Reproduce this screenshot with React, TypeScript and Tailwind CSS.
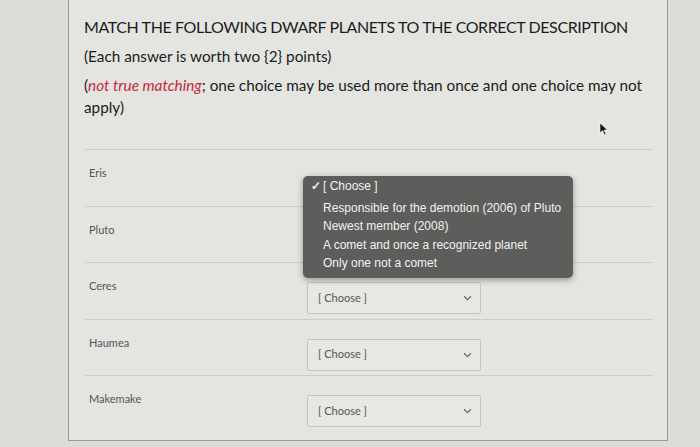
import React from "react";

const rows = ["Eris", "Pluto", "Ceres", "Haumea", "Makemake"];

function Chevron() {
  return (
    <svg width="9" height="6" viewBox="0 0 9 6" className="shrink-0">
      <path d="M1 1.2 L4.5 4.6 L8 1.2" fill="none" stroke="#6b6b6b" strokeWidth="1.3" />
    </svg>
  );
}

function Select({ hidden }: { hidden?: boolean }) {
  return (
    <div
      className={`flex h-[32px] w-[174px] items-center justify-between rounded-[2px] border border-[#c4c4c1] bg-[#e7e7e4] pl-[10px] pr-[8px] ${hidden ? "invisible" : ""}`}
    >
      <span className="text-[11px] text-[#555]">[ Choose ]</span>
      <Chevron />
    </div>
  );
}

export default function App() {
  return (
    <div className="h-[447px] w-[700px] overflow-hidden bg-[#dcdcd9] font-['Lato','Liberation_Sans',sans-serif]">
      <div className="relative ml-[68px] h-[441px] w-[600px] border-b border-l border-r border-[#9c9c99] bg-[#e4e4e1]">
        <div className="px-[15px] pt-[14px] text-[#1c1c1c]">
          <h1 className="whitespace-nowrap text-[16px] leading-[26px] tracking-[-0.4px]">
            MATCH THE FOLLOWING DWARF PLANETS TO THE CORRECT DESCRIPTION
          </h1>
          <p className="mt-[4px] text-[15.3px] leading-[24px]">(Each answer is worth two {"{2}"} points)</p>
          <p className="mt-[6px] text-[15.3px] leading-[22px]">
            (<em className="text-[#c8283a]">not true matching</em>; one choice may be used more than once and one choice may not apply)
          </p>
        </div>
        <div className="ml-[16px] mr-[14px] mt-[31px]">
          {rows.map((r, i) => (
            <div key={r} className="flex h-[56.5px] items-start border-t border-[#cbcbc8]">
              <div className="w-[222px] pl-[4px] pt-[15px] text-[11px] text-[#555]">{r}</div>
              <div className="pt-[19px]">
                <Select hidden={i < 2} />
              </div>
            </div>
          ))}
        </div>

        <div className="absolute left-[234px] top-[176px] w-[270px] rounded-[5px] bg-[#5d5d5c] px-[8px] pb-[5px] pt-[1px] font-['Liberation_Sans',sans-serif] text-[12px] leading-[18.5px] text-[#f2f2f2] shadow-[0_2px_6px_rgba(0,0,0,0.35)]">
          <div className="mb-[3px] flex items-center">
            <span className="w-[12px] text-[12px] font-bold">✓</span>
            <span>[ Choose ]</span>
          </div>
          <div className="pl-[12px]">Responsible for the demotion (2006) of Pluto</div>
          <div className="pl-[12px]">Newest member (2008)</div>
          <div className="pl-[12px]">A comet and once a recognized planet</div>
          <div className="pl-[12px]">Only one not a comet</div>
        </div>

        <svg className="absolute left-[530px] top-[122px]" width="10" height="14" viewBox="0 0 10 14">
          <path d="M1 1 L1 11 L3.5 8.6 L5.5 13 L7 12.3 L5 8 L8.5 8 Z" fill="#111" stroke="#fff" strokeWidth="0.6" />
        </svg>
      </div>
    </div>
  );
}
